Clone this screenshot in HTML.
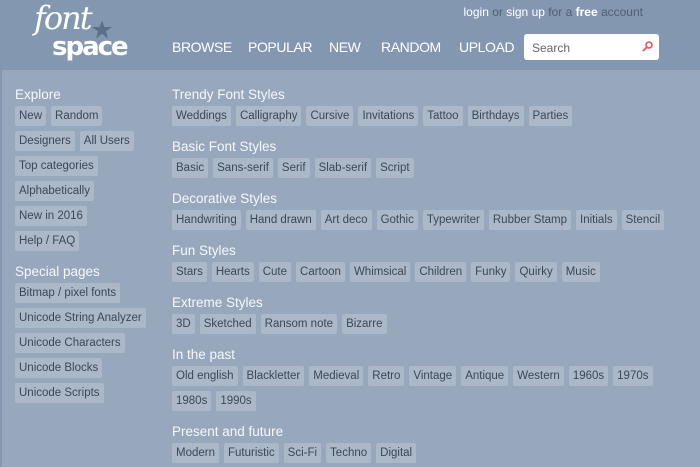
<!DOCTYPE html>
<html><head><meta charset="utf-8"><style>
*{margin:0;padding:0;box-sizing:border-box}
body{width:700px;height:467px;overflow:hidden;background:#8398b0;font-family:"Liberation Sans",sans-serif;position:relative}
.top{position:absolute;right:57px;top:5px;font-size:12px;color:#4f5f73}
.top b,.top span{color:#fff;font-weight:normal}
.top b{font-weight:bold;color:#fff}
.nav{position:absolute;top:39px;font-size:14px;color:#fff;letter-spacing:-0.4px}
.search{position:absolute;left:524px;top:34px;width:135px;height:26px;background:#fff;border-radius:3px;font-size:12px;color:#666;padding:7px 8px}
.panel{position:absolute;left:2px;top:70px;width:698px;height:397px;background:#97a8bd}
.h{position:absolute;font-size:13.5px;color:#f5f7fa}
.row{position:absolute;display:flex;gap:5px}
.t{background:#aab8c8;color:#3c4858;font-size:11.5px;height:20px;line-height:20px;padding:0 4px;border-radius:2px;white-space:nowrap}
.logo1{position:absolute;left:34px;top:0px;font-family:"DejaVu Serif",serif;font-style:italic;font-size:32px;color:#fff;letter-spacing:-2px;line-height:36px}
.logo2{position:absolute;left:52px;top:32px;font-family:"DejaVu Sans",sans-serif;font-weight:bold;font-size:26px;color:#fff;letter-spacing:-2px;line-height:30px}
</style></head><body>
<div class="logo1">font</div>
<svg style="position:absolute;left:92px;top:20px" width="20" height="19" viewBox="0 0 24 22"><polygon points="12,0 15,8 24,8 17,13 19,22 12,16 5,22 7,13 0,8 9,8" fill="#5d7089"/></svg>
<div class="logo2">space</div>
<div class="top"><span>login</span> or <span>sign up</span> for a <b>free</b> account</div>
<div class="nav" style="left:172px">BROWSE</div>
<div class="nav" style="left:248px">POPULAR</div>
<div class="nav" style="left:329px">NEW</div>
<div class="nav" style="left:381px">RANDOM</div>
<div class="nav" style="left:459px">UPLOAD</div>
<div class="search">Search<svg style="position:absolute;right:6px;top:7px" width="11" height="11" viewBox="0 0 11 11"><circle cx="7" cy="4" r="3" fill="none" stroke="#e8505b" stroke-width="1.6"/><line x1="5" y1="6" x2="1" y2="10" stroke="#e8505b" stroke-width="1.8"/></svg></div>
<div class="panel"></div>
<div class="h" style="left:15px;top:87px">Explore</div>
<div class="row" style="left:15px;top:106px"><span class="t">New</span><span class="t">Random</span></div>
<div class="row" style="left:15px;top:131px"><span class="t">Designers</span><span class="t">All Users</span></div>
<div class="row" style="left:15px;top:156px"><span class="t">Top categories</span></div>
<div class="row" style="left:15px;top:181px"><span class="t">Alphabetically</span></div>
<div class="row" style="left:15px;top:206px"><span class="t">New in 2016</span></div>
<div class="row" style="left:15px;top:231px"><span class="t">Help / FAQ</span></div>
<div class="h" style="left:15px;top:264px">Special pages</div>
<div class="row" style="left:15px;top:283px"><span class="t">Bitmap / pixel fonts</span></div>
<div class="row" style="left:15px;top:308px"><span class="t">Unicode String Analyzer</span></div>
<div class="row" style="left:15px;top:333px"><span class="t">Unicode Characters</span></div>
<div class="row" style="left:15px;top:358px"><span class="t">Unicode Blocks</span></div>
<div class="row" style="left:15px;top:383px"><span class="t">Unicode Scripts</span></div>

<div class="h" style="left:172px;top:87px">Trendy Font Styles</div>
<div class="row" style="left:172px;top:106px"><span class="t">Weddings</span><span class="t">Calligraphy</span><span class="t">Cursive</span><span class="t">Invitations</span><span class="t">Tattoo</span><span class="t">Birthdays</span><span class="t">Parties</span></div>
<div class="h" style="left:172px;top:139px">Basic Font Styles</div>
<div class="row" style="left:172px;top:158px"><span class="t">Basic</span><span class="t">Sans-serif</span><span class="t">Serif</span><span class="t">Slab-serif</span><span class="t">Script</span></div>
<div class="h" style="left:172px;top:191px">Decorative Styles</div>
<div class="row" style="left:172px;top:210px"><span class="t">Handwriting</span><span class="t">Hand drawn</span><span class="t">Art deco</span><span class="t">Gothic</span><span class="t">Typewriter</span><span class="t">Rubber Stamp</span><span class="t">Initials</span><span class="t">Stencil</span></div>
<div class="h" style="left:172px;top:243px">Fun Styles</div>
<div class="row" style="left:172px;top:262px"><span class="t">Stars</span><span class="t">Hearts</span><span class="t">Cute</span><span class="t">Cartoon</span><span class="t">Whimsical</span><span class="t">Children</span><span class="t">Funky</span><span class="t">Quirky</span><span class="t">Music</span></div>
<div class="h" style="left:172px;top:295px">Extreme Styles</div>
<div class="row" style="left:172px;top:314px"><span class="t">3D</span><span class="t">Sketched</span><span class="t">Ransom note</span><span class="t">Bizarre</span></div>
<div class="h" style="left:172px;top:347px">In the past</div>
<div class="row" style="left:172px;top:366px"><span class="t">Old english</span><span class="t">Blackletter</span><span class="t">Medieval</span><span class="t">Retro</span><span class="t">Vintage</span><span class="t">Antique</span><span class="t">Western</span><span class="t">1960s</span><span class="t">1970s</span></div>
<div class="row" style="left:172px;top:391px"><span class="t">1980s</span><span class="t">1990s</span></div>
<div class="h" style="left:172px;top:424px">Present and future</div>
<div class="row" style="left:172px;top:443px"><span class="t">Modern</span><span class="t">Futuristic</span><span class="t">Sci-Fi</span><span class="t">Techno</span><span class="t">Digital</span></div>
</body></html>
